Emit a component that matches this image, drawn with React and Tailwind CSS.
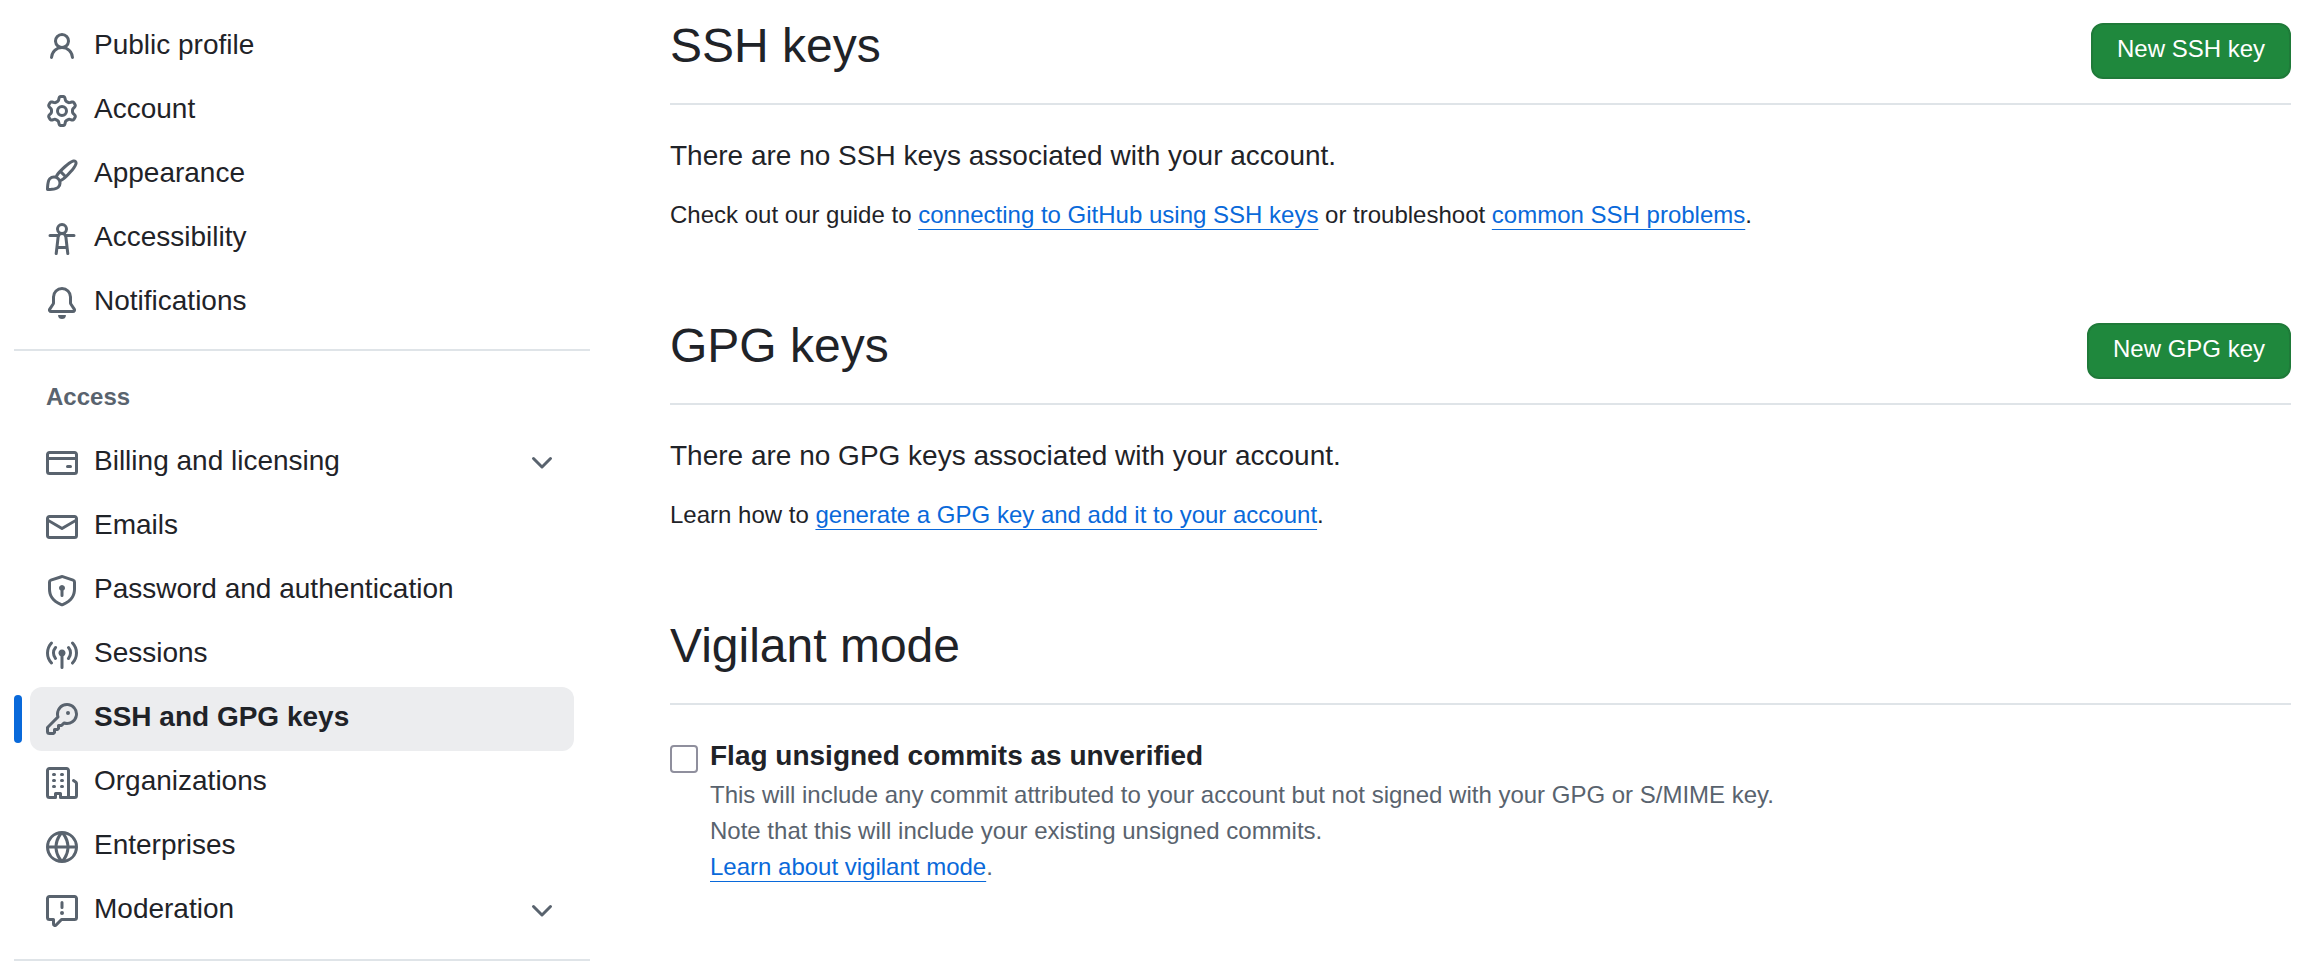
import { useState } from "react";

// 16px icon outlines
const ICONS = {
  person:
    "M10.561 8.073a6.005 6.005 0 0 1 3.432 5.142.75.75 0 1 1-1.498.07 4.5 4.5 0 0 0-8.99 0 .75.75 0 0 1-1.498-.07 6.004 6.004 0 0 1 3.431-5.142 3.999 3.999 0 1 1 5.123 0ZM10.5 5a2.5 2.5 0 1 0-5 0 2.5 2.5 0 0 0 5 0Z",
  gear: "M8 0a8.2 8.2 0 0 1 .701.031C9.444.095 9.99.645 10.16 1.29l.288 1.107c.018.066.079.158.212.224.231.114.454.243.668.386.123.082.233.09.299.071l1.103-.303c.644-.176 1.392.021 1.82.63.27.385.506.792.704 1.218.315.675.111 1.422-.364 1.891l-.814.806c-.049.048-.098.147-.088.294.016.257.016.515 0 .772-.01.147.038.246.088.294l.814.806c.475.469.679 1.216.364 1.891a7.977 7.977 0 0 1-.704 1.217c-.428.61-1.176.807-1.82.63l-1.102-.302c-.067-.019-.177-.011-.3.071a5.909 5.909 0 0 1-.668.386c-.133.066-.194.158-.211.224l-.29 1.106c-.168.646-.715 1.196-1.458 1.26a8.006 8.006 0 0 1-1.402 0c-.743-.064-1.289-.614-1.458-1.26l-.289-1.106c-.018-.066-.079-.158-.212-.224a5.738 5.738 0 0 1-.668-.386c-.123-.082-.233-.09-.299-.071l-1.103.303c-.644.176-1.392-.021-1.82-.63a8.12 8.12 0 0 1-.704-1.218c-.315-.675-.111-1.422.363-1.891l.815-.806c.05-.048.098-.147.088-.294a6.214 6.214 0 0 1 0-.772c.01-.147-.038-.246-.088-.294l-.815-.806C.635 6.045.431 5.298.746 4.623a7.92 7.92 0 0 1 .704-1.217c.428-.61 1.176-.807 1.82-.63l1.102.302c.067.019.177.011.3-.071.214-.143.437-.272.668-.386.133-.066.194-.158.211-.224l.29-1.106C6.009.645 6.556.095 7.299.03 7.53.01 7.764 0 8 0Zm-.571 1.525c-.036.003-.108.036-.137.146l-.289 1.105c-.147.561-.549.967-.998 1.189-.173.086-.34.183-.5.29-.417.278-.97.423-1.529.27l-1.103-.303c-.109-.03-.175.016-.195.045-.22.312-.412.644-.573.99-.014.031-.021.11.059.19l.815.806c.411.406.562.957.53 1.456a4.709 4.709 0 0 0 0 .582c.032.499-.119 1.05-.53 1.456l-.815.806c-.081.08-.073.159-.059.19.162.346.353.677.573.989.02.03.085.076.195.046l1.102-.303c.56-.153 1.113-.008 1.53.27.161.107.328.204.501.29.447.222.85.629.997 1.189l.289 1.105c.029.109.101.143.137.146a6.6 6.6 0 0 0 1.142 0c.036-.003.108-.036.137-.146l.289-1.105c.147-.561.549-.967.998-1.189.173-.086.34-.183.5-.29.417-.278.97-.423 1.529-.27l1.103.303c.109.029.175-.016.195-.045.22-.313.411-.644.573-.99.014-.031.021-.11-.059-.19l-.815-.806c-.411-.406-.562-.957-.53-1.456a4.709 4.709 0 0 0 0-.582c-.032-.499.119-1.05.53-1.456l.815-.806c.081-.08.073-.159.059-.19a6.464 6.464 0 0 0-.573-.989c-.02-.03-.085-.076-.195-.046l-1.102.303c-.56.153-1.113.008-1.53-.27a4.44 4.44 0 0 0-.501-.29c-.447-.222-.85-.629-.997-1.189l-.289-1.105c-.029-.11-.101-.143-.137-.146a6.6 6.6 0 0 0-1.142 0ZM11 8a3 3 0 1 1-6 0 3 3 0 0 1 6 0ZM9.5 8a1.5 1.5 0 1 0-3.001.001A1.5 1.5 0 0 0 9.5 8Z",
  paintbrush:
    "M11.134 1.535c.7-.509 1.416-.942 2.076-1.155.649-.21 1.463-.267 2.069.34.603.601.568 1.411.368 2.07-.202.668-.624 1.39-1.125 2.096-1.011 1.424-2.496 2.987-3.775 4.249-1.098 1.084-2.132 1.839-3.04 2.3a3.744 3.744 0 0 1-1.055 3.217c-.431.431-1.065.691-1.657.861-.614.177-1.294.287-1.914.357A21.151 21.151 0 0 1 .797 16H.743l.007-.75H.749L.742 16a.75.75 0 0 1-.743-.742l.743-.008-.742.007v-.054a21.25 21.25 0 0 1 .13-2.284c.067-.647.187-1.287.358-1.914.17-.591.43-1.226.86-1.657a3.746 3.746 0 0 1 3.227-1.054c.466-.893 1.225-1.907 2.314-2.982 1.271-1.255 2.833-2.75 4.245-3.777ZM1.62 13.089c-.051.464-.086.929-.104 1.395.466-.018.932-.053 1.396-.104a10.511 10.511 0 0 0 1.668-.309c.526-.151.856-.325 1.011-.48a2.25 2.25 0 1 0-3.182-3.182c-.155.155-.329.485-.48 1.01a10.515 10.515 0 0 0-.309 1.67Zm10.396-10.34c-1.224.89-2.605 2.189-3.822 3.384l1.718 1.718c1.21-1.205 2.51-2.597 3.387-3.833.47-.662.78-1.227.912-1.662.134-.444.032-.551.009-.575h-.001V1.78c-.014-.014-.113-.113-.548.027-.432.14-.995.462-1.655.942Zm-4.832 7.266-.001.001a9.859 9.859 0 0 0 1.63-1.142L7.155 7.216a9.7 9.7 0 0 0-1.161 1.607c.482.302.889.71 1.19 1.192Z",
  accessibility:
    "M9.923 5.302c.063.063.122.129.178.198H14A.75.75 0 0 1 14 7h-3.3l.578 5.163.362 2.997a.75.75 0 0 1-1.49.18L9.868 13H6.132l-.282 2.34a.75.75 0 0 1-1.49-.18l.362-2.997L5.3 7H2a.75.75 0 0 1 0-1.5h3.9a2.54 2.54 0 0 1 .176-.198 3 3 0 1 1 3.847 0ZM9.2 7.073h-.001a1.206 1.206 0 0 0-2.398 0L6.305 11.5h3.39ZM9.5 3a1.5 1.5 0 1 0-3.001.001A1.5 1.5 0 0 0 9.5 3Z",
  bell: "M8 16a2 2 0 0 0 1.985-1.75c.017-.137-.097-.25-.235-.25h-3.5c-.138 0-.252.113-.235.25A2 2 0 0 0 8 16ZM3 5a5 5 0 0 1 10 0v2.947c0 .05.015.098.042.139l1.703 2.555A1.519 1.519 0 0 1 13.482 13H2.518a1.516 1.516 0 0 1-1.263-2.36l1.703-2.554A.255.255 0 0 0 3 7.947Zm5-3.5A3.5 3.5 0 0 0 4.5 5v2.947c0 .346-.102.683-.294.97l-1.703 2.556a.017.017 0 0 0-.003.01l.001.006c0 .002.002.004.004.006l.006.004.007.001h10.964l.007-.001.006-.004.004-.006.001-.007a.017.017 0 0 0-.003-.01l-1.703-2.554a1.745 1.745 0 0 1-.294-.97V5A3.5 3.5 0 0 0 8 1.5Z",
  creditCard:
    "M10.75 9a.75.75 0 0 0 0 1.5h1.5a.75.75 0 0 0 0-1.5h-1.5ZM0 3.75C0 2.784.784 2 1.75 2h12.5c.966 0 1.75.784 1.75 1.75v8.5A1.75 1.75 0 0 1 14.25 14H1.75A1.75 1.75 0 0 1 0 12.25ZM14.5 6.5h-13v5.75c0 .138.112.25.25.25h12.5a.25.25 0 0 0 .25-.25Zm0-2.75a.25.25 0 0 0-.25-.25H1.75a.25.25 0 0 0-.25.25V5h13Z",
  mail: "M1.75 2h12.5c.966 0 1.75.784 1.75 1.75v8.5A1.75 1.75 0 0 1 14.25 14H1.75A1.75 1.75 0 0 1 0 12.25v-8.5C0 2.784.784 2 1.75 2ZM1.5 12.251c0 .138.112.25.25.25h12.5a.25.25 0 0 0 .25-.25V5.809L8.38 9.397a.75.75 0 0 1-.76 0L1.5 5.809v6.442Zm13-8.181v-.32a.25.25 0 0 0-.25-.25H1.75a.25.25 0 0 0-.25.25v.32L8 7.88Z",
  shieldLock:
    "m8.533.133 5.25 1.68A1.75 1.75 0 0 1 15 3.48V7c0 1.566-.32 3.182-1.303 4.682-.983 1.498-2.585 2.813-5.032 3.855a1.697 1.697 0 0 1-1.33 0c-2.447-1.042-4.049-2.357-5.032-3.855C1.32 10.182 1 8.566 1 7V3.48a1.75 1.75 0 0 1 1.217-1.667l5.25-1.68a1.748 1.748 0 0 1 1.066 0Zm-.61 1.429.001.001-5.25 1.68a.251.251 0 0 0-.174.237V7c0 1.36.275 2.666 1.057 3.859.784 1.194 2.121 2.342 4.366 3.298a.196.196 0 0 0 .154 0c2.245-.957 3.582-2.103 4.366-3.297C13.225 9.666 13.5 8.358 13.5 7V3.48a.25.25 0 0 0-.174-.238l-5.25-1.68a.25.25 0 0 0-.153 0ZM9.5 6.5c0 .536-.286 1.032-.75 1.3v2.45a.75.75 0 0 1-1.5 0V7.8A1.5 1.5 0 1 1 9.5 6.5Z",
  broadcast:
    "M8.75 8.582v5.668a.75.75 0 0 1-1.5 0V8.582a1.75 1.75 0 1 1 1.5 0Zm3.983-7.125a.75.75 0 0 1 1.06.026A7.976 7.976 0 0 1 16 7c0 2.139-.84 4.083-2.207 5.517a.75.75 0 1 1-1.086-1.034A6.474 6.474 0 0 0 14.5 7a6.474 6.474 0 0 0-1.793-4.483.75.75 0 0 1 .026-1.06Zm-9.466 0c.3.286.312.76.026 1.06A6.474 6.474 0 0 0 1.5 7a6.47 6.47 0 0 0 1.793 4.483.75.75 0 0 1-1.086 1.034A7.973 7.973 0 0 1 0 7c0-2.139.84-4.083 2.207-5.517a.75.75 0 0 1 1.06-.026Zm8.556 2.321A4.988 4.988 0 0 1 13 7a4.988 4.988 0 0 1-1.177 3.222.75.75 0 1 1-1.146-.967A3.487 3.487 0 0 0 11.5 7c0-.86-.309-1.645-.823-2.255a.75.75 0 0 1 1.146-.967Zm-6.492.958A3.48 3.48 0 0 0 4.5 7a3.48 3.48 0 0 0 .823 2.255.75.75 0 0 1-1.146.967A4.981 4.981 0 0 1 3 7a4.982 4.982 0 0 1 1.188-3.236.75.75 0 1 1 1.143.972Z",
  key: "M10.5 0a5.499 5.499 0 1 1-1.288 10.848l-.932.932a.749.749 0 0 1-.53.22H7v.75a.749.749 0 0 1-.22.53l-.5.5a.749.749 0 0 1-.53.22H5v.75a.749.749 0 0 1-.22.53l-.5.5a.749.749 0 0 1-.53.22h-2A1.75 1.75 0 0 1 0 14.25v-2c0-.199.079-.389.22-.53l4.932-4.932A5.5 5.5 0 0 1 10.5 0Zm-4 5.5c-.001.431.069.86.205 1.269a.75.75 0 0 1-.181.768L1.5 12.56v1.69c0 .138.112.25.25.25h1.69l.06-.06v-1.19a.75.75 0 0 1 .75-.75h1.19l.06-.06v-1.19a.75.75 0 0 1 .75-.75h1.19l1.023-1.025a.75.75 0 0 1 .768-.18A4 4 0 1 0 6.5 5.5ZM11 6a1 1 0 1 1 0-2 1 1 0 0 1 0 2Z",
  organization:
    "M1.75 16A1.75 1.75 0 0 1 0 14.25V1.75C0 .784.784 0 1.75 0h8.5C11.216 0 12 .784 12 1.75v12.5c0 .085-.006.168-.018.25h2.268a.25.25 0 0 0 .25-.25V8.285a.25.25 0 0 0-.111-.208l-1.055-.703a.749.749 0 1 1 .832-1.248l1.055.703c.487.325.779.871.779 1.456v5.965A1.75 1.75 0 0 1 14.25 16h-3.5a.766.766 0 0 1-.197-.026c-.099.017-.2.026-.303.026h-3a.75.75 0 0 1-.75-.75V14h-1v1.25a.75.75 0 0 1-.75.75Zm-.25-1.75c0 .138.112.25.25.25H4v-1.25a.75.75 0 0 1 .75-.75h2.5a.75.75 0 0 1 .75.75v1.25h2.25a.25.25 0 0 0 .25-.25V1.75a.25.25 0 0 0-.25-.25h-8.5a.25.25 0 0 0-.25.25ZM3.75 6h.5a.75.75 0 0 1 0 1.5h-.5a.75.75 0 0 1 0-1.5ZM3 3.75A.75.75 0 0 1 3.75 3h.5a.75.75 0 0 1 0 1.5h-.5A.75.75 0 0 1 3 3.75Zm4 3A.75.75 0 0 1 7.75 6h.5a.75.75 0 0 1 0 1.5h-.5A.75.75 0 0 1 7 6.75ZM7.75 3h.5a.75.75 0 0 1 0 1.5h-.5a.75.75 0 0 1 0-1.5ZM3 9.75A.75.75 0 0 1 3.75 9h.5a.75.75 0 0 1 0 1.5h-.5A.75.75 0 0 1 3 9.75ZM7.75 9h.5a.75.75 0 0 1 0 1.5h-.5a.75.75 0 0 1 0-1.5Z",
  globe:
    "M8 0a8 8 0 1 1 0 16A8 8 0 0 1 8 0ZM5.78 8.75a9.64 9.64 0 0 0 1.363 4.177c.255.426.542.832.857 1.215.245-.296.551-.705.857-1.215A9.64 9.64 0 0 0 10.22 8.75Zm4.44-1.5a9.64 9.64 0 0 0-1.363-4.177c-.307-.51-.612-.919-.857-1.215a9.927 9.927 0 0 0-.857 1.215A9.64 9.64 0 0 0 5.78 7.25Zm-5.944 1.5H1.543a6.507 6.507 0 0 0 4.666 5.5c-.123-.181-.24-.365-.352-.552-.715-1.192-1.437-2.874-1.581-4.948Zm-2.733-1.5h2.733c.144-2.074.866-3.756 1.58-4.948.12-.197.237-.381.353-.552a6.507 6.507 0 0 0-4.666 5.5Zm10.181 1.5c-.144 2.074-.866 3.756-1.58 4.948-.12.197-.237.381-.353.552a6.507 6.507 0 0 0 4.666-5.5Zm2.733-1.5a6.507 6.507 0 0 0-4.666-5.5c.123.181.24.365.353.552.714 1.192 1.436 2.874 1.58 4.948Z",
  report:
    "M0 1.75C0 .784.784 0 1.75 0h12.5C15.216 0 16 .784 16 1.75v9.5A1.75 1.75 0 0 1 14.25 13H8.06l-2.573 2.573A1.458 1.458 0 0 1 3 14.543V13H1.75A1.75 1.75 0 0 1 0 11.25Zm1.75-.25a.25.25 0 0 0-.25.25v9.5c0 .138.112.25.25.25h2a.75.75 0 0 1 .75.75v2.19l2.72-2.72a.749.749 0 0 1 .53-.22h6.5a.25.25 0 0 0 .25-.25v-9.5a.25.25 0 0 0-.25-.25Zm7 2.25v2.5a.75.75 0 0 1-1.5 0v-2.5a.75.75 0 0 1 1.5 0ZM9 9a1 1 0 1 1-2 0 1 1 0 0 1 2 0Z",
  chevronDown:
    "M12.78 5.22a.749.749 0 0 1 0 1.06l-4.25 4.25a.749.749 0 0 1-1.06 0L3.22 6.28a.749.749 0 1 1 1.06-1.06L8 8.939l3.72-3.719a.749.749 0 0 1 1.06 0Z",
};

const accountItems = [
  { label: "Public profile", icon: "person" },
  { label: "Account", icon: "gear" },
  { label: "Appearance", icon: "paintbrush" },
  { label: "Accessibility", icon: "accessibility" },
  { label: "Notifications", icon: "bell" },
];

const accessItems = [
  { label: "Billing and licensing", icon: "creditCard", expandable: true },
  { label: "Emails", icon: "mail" },
  { label: "Password and authentication", icon: "shieldLock" },
  { label: "Sessions", icon: "broadcast" },
  { label: "SSH and GPG keys", icon: "key", current: true },
  { label: "Organizations", icon: "organization" },
  { label: "Enterprises", icon: "globe" },
  { label: "Moderation", icon: "report", expandable: true },
];

const App = () => {
  const [vigilant, setVigilant] = useState(false);

  return (
    <div className="flex min-h-screen gap-20 bg-white pr-4 pl-[14px] font-['Liberation_Sans',Arial,sans-serif] text-[28px] leading-[42px] text-[#1f2328]">
      {/* Sidebar */}
      <nav aria-label="Settings" className="w-[576px] shrink-0 pt-[15px]">
        <NavList items={accountItems} />
        <hr className="mt-[14px] border-t-2 border-[#dfe4e8]" />
        <h3 className="px-8 pt-7 pb-4 text-[24px] leading-9 font-bold text-[#59636e]">
          Access
        </h3>
        <NavList items={accessItems} />
        <hr className="mt-4 border-t-2 border-[#dfe4e8]" />
      </nav>

      {/* Settings content */}
      <main className="flex min-w-0 flex-1 flex-col gap-[78px] pt-[11px]">
        <section>
          <SectionHeader title="SSH keys" action="New SSH key" />
          <p className="mt-[30px]">
            There are no SSH keys associated with your account.
          </p>
          <p className="mt-5 text-[24px] leading-9">
            Check out our guide to{" "}
            <TextLink>connecting to GitHub using SSH keys</TextLink> or
            troubleshoot <TextLink>common SSH problems</TextLink>.
          </p>
        </section>

        <section>
          <SectionHeader title="GPG keys" action="New GPG key" />
          <p className="mt-[30px]">
            There are no GPG keys associated with your account.
          </p>
          <p className="mt-5 text-[24px] leading-9">
            Learn how to{" "}
            <TextLink>generate a GPG key and add it to your account</TextLink>.
          </p>
        </section>

        <section>
          <SectionHeader title="Vigilant mode" />
          <div className="mt-[30px] flex items-start gap-3">
            <input
              id="vigilant-mode"
              type="checkbox"
              checked={vigilant}
              onChange={(e) => setVigilant(e.target.checked)}
              aria-describedby="vigilant-mode-note"
              className="mt-[10px] size-7 shrink-0 appearance-none rounded-[4px] border-2 border-[#8f8f9d] bg-white checked:border-[#0969da] checked:bg-[#0969da]"
            />
            <div>
              <label htmlFor="vigilant-mode" className="block font-bold">
                Flag unsigned commits as unverified
              </label>
              <p
                id="vigilant-mode-note"
                className="text-[24px] leading-9 text-[#59636e]"
              >
                This will include any commit attributed to your account but not
                signed with your GPG or S/MIME key.
                <br />
                Note that this will include your existing unsigned commits.
                <br />
                <TextLink>Learn about vigilant mode</TextLink>.
              </p>
            </div>
          </div>
        </section>
      </main>
    </div>
  );
};

const Icon = ({ name }) => (
  <svg
    viewBox="0 0 16 16"
    fill="currentColor"
    aria-hidden="true"
    className="size-8 shrink-0 text-[#59636e]"
  >
    <path d={ICONS[name]} />
  </svg>
);

const NavList = ({ items }) => (
  <ul>
    {items.map((item) => (
      <NavItem key={item.label} {...item} />
    ))}
  </ul>
);

const NavItem = ({ label, icon, current = false, expandable = false }) => {
  const Tag = expandable ? "button" : "a";
  const tagProps = expandable
    ? { type: "button", "aria-expanded": false }
    : { href: "#", "aria-current": current ? "page" : undefined };

  return (
    <li className="flex items-center gap-2 pr-4">
      <span
        className={`h-12 w-2 shrink-0 rounded-full ${
          current ? "bg-[#0969da]" : ""
        }`}
      />
      <Tag
        {...tagProps}
        className={`flex h-16 flex-1 cursor-pointer items-center gap-4 rounded-xl px-4 text-left ${
          current ? "bg-[#ecedef] font-bold" : "hover:bg-[#f3f4f6]"
        }`}
      >
        <Icon name={icon} />
        <span className="flex-1 pb-[5px] leading-10">{label}</span>
        {expandable && <Icon name="chevronDown" />}
      </Tag>
    </li>
  );
};

const SectionHeader = ({ title, action }) => (
  <div className="flex items-end justify-between border-b-2 border-[#dfe4e8] pb-6">
    <h2 className="pt-0.5 text-[48px] leading-[66px]">{title}</h2>
    {action && (
      <button
        type="button"
        className="h-14 cursor-pointer rounded-xl border-2 border-[#1f7a39] bg-[#1f883d] px-6 pb-[5px] text-[24px] leading-9 font-medium text-white"
      >
        {action}
      </button>
    )}
  </div>
);

const TextLink = ({ children }) => (
  <a
    href="#"
    className="text-[#0969da] underline decoration-1 underline-offset-[6px] [text-decoration-skip-ink:none]"
  >
    {children}
  </a>
);

export default App;
